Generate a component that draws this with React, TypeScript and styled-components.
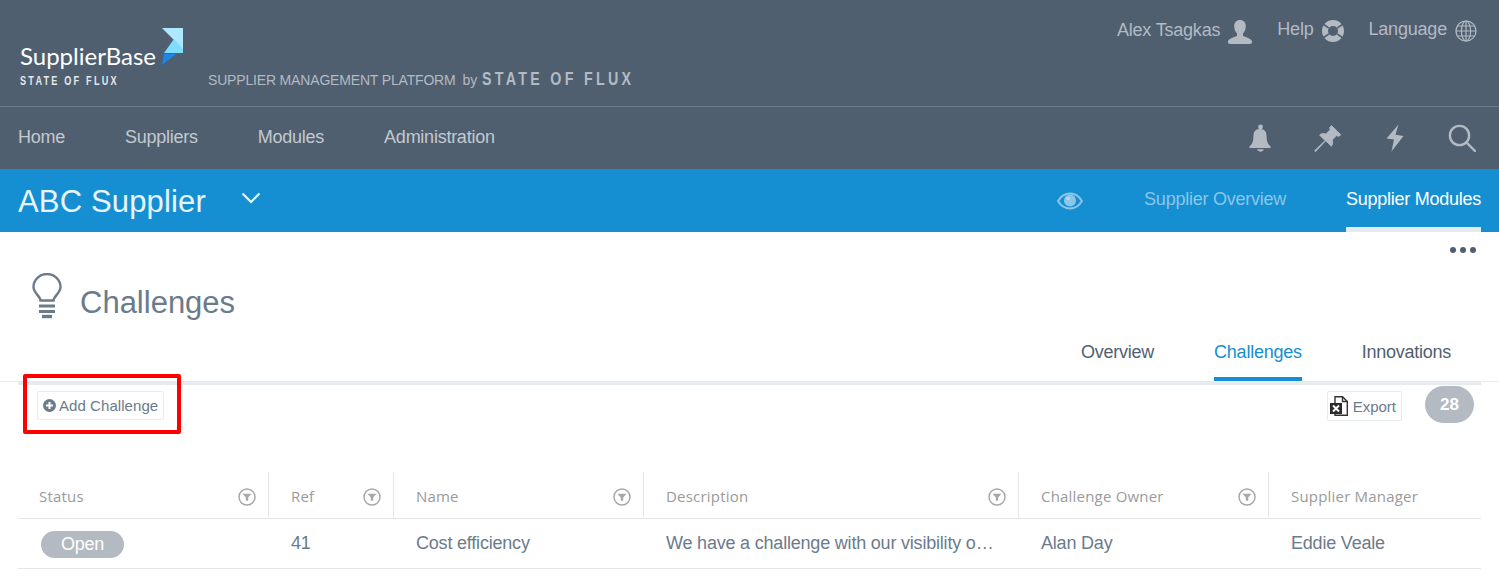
import React from 'react';
import styled, { createGlobalStyle } from 'styled-components';

const GlobalStyle = createGlobalStyle`
  html, body {
    margin: 0;
    padding: 0;
    background: #fff;
    overflow: hidden;
    font-family: 'Liberation Sans', Arial, sans-serif;
  }
`;

const Page = styled.div`
  position: relative;
  width: 1499px;
  height: 578px;
  overflow: hidden;
`;

const TopBar = styled.header`
  height: 106px;
  background: #4f5f70;
  border-bottom: 1px solid #6c7a89;
  display: flex;
  justify-content: space-between;
`;

const Brand = styled.div`
  display: flex;
  align-items: flex-end;
  padding: 0 0 17px 20px;
`;

const Logo = styled.div`
  position: relative;
  width: 164px;
  height: 60px;
  color: #fff;
`;

const LogoName = styled.div`
  position: absolute;
  left: 0;
  top: 13px;
  font-family: 'Lato', sans-serif;
  font-size: 24px;
  line-height: 28px;
`;

const LogoSub = styled.div`
  position: absolute;
  left: 0;
  top: 46px;
  font-weight: 700;
  font-size: 12px;
  letter-spacing: 2.9px;
  line-height: 12px;
  white-space: nowrap;
  color: #e4e7ea;
  transform: scaleX(0.76);
  transform-origin: left center;
`;

const LogoMark = styled.svg`
  position: absolute;
  left: 142px;
  top: -1px;
`;

const Tagline = styled.div`
  margin-left: 24px;
  display: flex;
  align-items: baseline;
  color: #b3bac2;
  font-size: 14px;
  letter-spacing: -0.17px;
  line-height: 18px;
  white-space: nowrap;
`;

const By = styled.span`
  margin-left: 7px;
`;

const TagBrand = styled.span`
  display: inline-block;
  margin-left: 5px;
  font-weight: 700;
  font-size: 19px;
  letter-spacing: 4.4px;
  transform: scaleX(0.75);
  transform-origin: left center;
`;

const UserMenu = styled.div`
  display: flex;
  align-items: flex-start;
  padding: 16px 22px 0 0;
  gap: 25px;
`;

const UserItem = styled.div`
  display: flex;
  align-items: center;
  gap: 8px;
  color: #b3bac2;
  font-size: 18px;
  letter-spacing: -0.2px;
  line-height: 24px;
  svg {
    margin-top: 4px;
  }
`;

const NavBar = styled.nav`
  height: 62px;
  background: #4f5f70;
  display: flex;
  align-items: center;
  justify-content: space-between;
  padding: 0 23px 0 18px;
`;

const NavLinks = styled.div`
  display: flex;
  gap: 60px;
  margin-top: -2px;
`;

const NavLink = styled.a`
  color: #c3c9cf;
  font-size: 18px;
  letter-spacing: -0.25px;
`;

const NavIcons = styled.div`
  display: flex;
  align-items: center;
  gap: 39px;
  margin-top: -1px;
`;

const SupplierBar = styled.div`
  height: 63px;
  background: #158fd2;
  display: flex;
  align-items: center;
  justify-content: space-between;
  padding: 0 18px;
`;

const SupplierName = styled.div`
  display: flex;
  align-items: center;
  gap: 35px;
  padding-top: 2px;
  color: #e8f4fb;
  font-size: 31px;
  letter-spacing: 0.15px;
  svg {
    margin-bottom: 8px;
  }
`;

const SupplierTabs = styled.div`
  display: flex;
  align-items: stretch;
  height: 63px;
`;

const EyeWrap = styled.div`
  display: flex;
  align-items: center;
  margin-right: 61px;
`;

const SupplierTab = styled.a<{ $active?: boolean }>`
  display: flex;
  align-items: center;
  box-sizing: border-box;
  margin-left: ${(p) => (p.$active ? '60px' : '0')};
  padding-top: 3px;
  color: ${(p) => (p.$active ? '#ffffff' : '#8cc6e8')};
  font-size: 18px;
  letter-spacing: -0.25px;
  border-bottom: 5px solid ${(p) => (p.$active ? '#e6ebef' : 'transparent')};
`;

const Dots = styled.div`
  display: flex;
  justify-content: flex-end;
  gap: 4px;
  height: 21px;
  box-sizing: border-box;
  padding: 15px 23px 0 0;
`;

const Dot = styled.span`
  width: 6px;
  height: 6px;
  border-radius: 50%;
  background: #4f5f70;
`;

const TitleRow = styled.div`
  display: flex;
  align-items: flex-start;
  height: 87px;
  padding: 20px 0 0 32px;
  box-sizing: border-box;
`;

const Title = styled.h1`
  margin: 12px 0 0 18px;
  font-weight: 400;
  font-size: 31px;
  line-height: 36px;
  color: #6b7b8c;
`;

const TabsRow = styled.div`
  height: 42px;
  display: flex;
  justify-content: flex-end;
  gap: 60px;
  padding-right: 48px;
  box-sizing: border-box;
  border-bottom: 1px solid #e6ebef;
  position: relative;
  &::after {
    content: '';
    position: absolute;
    left: 18px;
    right: 18px;
    top: 41px;
    height: 4px;
    background: #e6ebef;
  }
`;

const PageTab = styled.a<{ $active?: boolean }>`
  color: ${(p) => (p.$active ? '#158fd2' : '#4f5f70')};
  font-size: 18px;
  letter-spacing: -0.25px;
  line-height: 24px;
  height: 41px;
  box-sizing: border-box;
  border-bottom: 4px solid ${(p) => (p.$active ? '#158fd2' : 'transparent')};
`;

const Toolbar = styled.div`
  display: flex;
  align-items: flex-start;
  justify-content: space-between;
  padding: 4px 25px 0 37px;
  height: 90px;
  box-sizing: border-box;
`;

const ToolButton = styled.button`
  display: flex;
  align-items: center;
  gap: 3px;
  height: 29px;
  margin: 5px 0 0;
  padding: 0 5px;
  background: #fff;
  border: 1px solid #e6ebef;
  border-radius: 2px;
  color: #6b7b8c;
  font-family: 'Liberation Sans', Arial, sans-serif;
  font-size: 15px;
  letter-spacing: 0.06px;
`;

const ExportButton = styled(ToolButton)`
  gap: 5px;
  height: 30px;
  padding-left: 2px;
  letter-spacing: 0;
`;

const ToolRight = styled.div`
  display: flex;
  align-items: flex-start;
  gap: 23px;
`;

const CountBadge = styled.div`
  width: 49px;
  height: 37px;
  border-radius: 19px;
  background: #b3bac2;
  color: #fff;
  font-weight: 700;
  font-size: 17px;
  display: flex;
  align-items: center;
  justify-content: center;
`;

const Table = styled.div`
  margin: 0 18px;
`;

const columns = '251px 125px 250px 375px 250px 212px';

const HeaderRow = styled.div`
  display: grid;
  grid-template-columns: ${columns};
  height: 46px;
  border-bottom: 1px solid #e6e6e6;
`;

const HeaderCell = styled.div`
  display: flex;
  align-items: center;
  justify-content: space-between;
  padding: 3px 12px 0 22px;
  color: #9a9a9a;
  font-family: 'Open Sans', sans-serif;
  font-size: 15px;
  letter-spacing: 0.2px;
  border-right: 1px solid #e6e6e6;
  &:first-child {
    padding-left: 21px;
  }
  &:last-child {
    border-right: 0;
  }
`;

const HeaderLabel = styled.span`
  margin-top: -2px;
`;

const BodyRow = styled.div`
  display: grid;
  grid-template-columns: ${columns};
  height: 49px;
  border-bottom: 1px solid #e6e6e6;
`;

const BodyCell = styled.div`
  display: flex;
  align-items: center;
  padding: 0 22px;
  color: #6b7b8c;
  font-size: 18px;
  letter-spacing: -0.2px;
  white-space: nowrap;
`;

const StatusPill = styled.span`
  display: inline-flex;
  align-items: center;
  justify-content: center;
  width: 83px;
  height: 27px;
  margin: 2px 0 0 1px;
  border-radius: 14px;
  background: #b3bac2;
  color: #fff;
  font-size: 18px;
`;

const Highlight = styled.div`
  position: absolute;
  left: 23px;
  top: 374px;
  width: 158px;
  height: 60px;
  box-sizing: border-box;
  border: 4px solid #ff0000;
  border-radius: 2px;
  pointer-events: none;
`;

const grey = '#b3bac2';

const FilterIcon = () => (
  <svg width="18" height="18" viewBox="0 0 18 18">
    <circle cx="9" cy="9" r="8" fill="none" stroke="#a8a8a8" strokeWidth="1.5" />
    <path d="M4.500 5.800h9L10.200 9.600v3.200H7.800V9.600z" fill="#a8a8a8" />
  </svg>
);

const UserIcon = () => (
  <svg width="24" height="24" viewBox="0 0 24 24" fill={grey}>
    <path d="M12 0c3.600 0 5.800 2.700 5.800 6.300 0 3-1.200 5.700-2.800 7.200v2.300c1.500 1.400 9 2.300 9 6.200 0 1.200-.5 2-2 2H2c-1.500 0-2-.8-2-2 0-3.900 7.500-4.800 9-6.200v-2.300C7.400 12 6.200 9.300 6.200 6.300 6.200 2.700 8.400 0 12 0z" />
  </svg>
);

const HelpIcon = () => (
  <svg width="22" height="22" viewBox="0 0 22 22" fill="none">
    <circle cx="11" cy="11" r="8" stroke={grey} strokeWidth="6" />
    <path
      d="M15.100 8.100L21 4M15.100 13.900L21 18M6.900 8.100L1 4M6.900 13.900L1 18"
      stroke="#4f5f70"
      strokeWidth="1.600"
    />
  </svg>
);

const GlobeIcon = () => (
  <svg width="22" height="22" viewBox="0 0 22 22" fill="none" stroke={grey} strokeWidth="1.200">
    <circle cx="11" cy="11" r="10" />
    <ellipse cx="11" cy="11" rx="4.600" ry="10" />
    <path d="M11 1v20M1 11h20M2.400 6h17.200M2.400 16h17.200" />
  </svg>
);

const BellIcon = () => (
  <svg width="28" height="28" viewBox="0 0 28 28" fill={grey}>
    <circle cx="13.500" cy="3" r="2.400" />
    <path d="M13.500 5c4.200 0 6 3.200 6 7 0 4.500 1 8.300 4 10.500V24h-21v-1.500c3-2.200 4-6 4-10.500 0-3.800 1.800-7 6-7z" />
    <path d="M10 25.300h7c-.7 1.700-2 2.400-3.500 2.400s-2.800-.7-3.500-2.400z" />
  </svg>
);

const PinIcon = () => (
  <svg width="28" height="28" viewBox="0 0 28 28" fill={grey}>
    <path
      stroke={grey}
      strokeWidth="0.800"
      strokeLinejoin="round"
      d="M17.500 1.500l9.300 9.300-2.300 1.600-1.900-.8-4.300 4.300c.8 2.500.4 4.700-1 6.400l-5.600-5.600L1.500 27.700l-.9-.9 10.500-10.200L5.500 11c1.700-1.400 3.900-1.800 6.400-1l4.300-4.300-.6-1.900z"
    />
  </svg>
);

const BoltIcon = () => (
  <svg width="28" height="28" viewBox="0 0 28 28" fill={grey}>
    <path d="M17.500 0.500L14.500 10.800 22.500 12 10.500 27.500 13 15.500 5.500 14.500z" />
  </svg>
);

const SearchIcon = () => (
  <svg width="28" height="28" viewBox="0 0 28 28" fill="none" stroke={grey} strokeWidth="2.400">
    <circle cx="11.500" cy="11.500" r="9.600" />
    <path d="M18.500 18.500L27 27" strokeLinecap="round" />
  </svg>
);

const EyeIcon = () => (
  <svg width="26" height="18" viewBox="0 0 26 18">
    <path
      d="M1 9C4 4 8 1.500 13 1.500S22 4 25 9c-3 5-7 7.500-12 7.500S4 14 1 9z"
      fill="none"
      stroke="#8cc6e8"
      strokeWidth="2"
    />
    <circle cx="13" cy="8.500" r="6" fill="#8cc6e8" />
    <circle cx="11" cy="6.500" r="1.800" fill="#b5daf0" />
  </svg>
);

const BulbIcon = () => (
  <svg width="30" height="46" viewBox="0 0 30 46" fill="none" stroke="#6b7b8c">
    <path
      strokeWidth="2.400"
      d="M8.500 27.500c0-4-7-7.500-7-13.500a13.500 13 0 0 1 27 0c0 6-7 9.500-7 13.500z"
    />
    <path strokeWidth="3" d="M7 33h16M7 38.500h16" />
    <path strokeWidth="3.400" d="M10 43.500h10" />
  </svg>
);

const ChevronIcon = () => (
  <svg width="20" height="12" viewBox="0 0 20 12" fill="none" stroke="#e8f4fb" strokeWidth="2.200">
    <path d="M1.500 1.500L10 10l8.500-8.500" />
  </svg>
);

const PlusCircleIcon = () => (
  <svg width="13" height="13" viewBox="0 0 13 13">
    <circle cx="6.500" cy="6.500" r="6.500" fill="#6b7b8c" />
    <path d="M6.500 3v7M3 6.500h7" stroke="#fff" strokeWidth="2" />
  </svg>
);

const ExcelIcon = () => (
  <svg width="18" height="20" viewBox="0 0 18 20">
    <path d="M5 .7h7.500l4.800 4.800v13.800H5z" fill="#fff" stroke="#333" strokeWidth="1.400" />
    <path d="M12.500.7v4.800h4.800" fill="none" stroke="#333" strokeWidth="1.400" />
    <rect x="0" y="7" width="12" height="11" fill="#2b2b2b" />
    <path d="M3 9.500l6 6M9 9.500l-6 6" stroke="#fff" strokeWidth="2" />
  </svg>
);

const LogoArrow = () => (
  <LogoMark width="21" height="37" viewBox="0 0 21 37">
    <path d="M0 0h21v23L12 12z" fill="#aee8ff" />
    <path d="M12 11l9 10v4H2z" fill="#7fdcff" />
    <path d="M2 26h12L0 37z" fill="#1f86e8" />
  </LogoMark>
);

export default function App() {
  return (
    <Page>
      <GlobalStyle />
      <TopBar>
        <Brand>
          <Logo>
            <LogoName>SupplierBase</LogoName>
            <LogoSub>STATE OF FLUX</LogoSub>
            <LogoArrow />
          </Logo>
          <Tagline>
            SUPPLIER MANAGEMENT PLATFORM
            <By>by</By>
            <TagBrand>STATE OF FLUX</TagBrand>
          </Tagline>
        </Brand>
        <UserMenu>
          <UserItem>
            Alex Tsagkas <UserIcon />
          </UserItem>
          <UserItem>
            Help <HelpIcon />
          </UserItem>
          <UserItem>
            Language <GlobeIcon />
          </UserItem>
        </UserMenu>
      </TopBar>
      <NavBar>
        <NavLinks>
          <NavLink>Home</NavLink>
          <NavLink>Suppliers</NavLink>
          <NavLink>Modules</NavLink>
          <NavLink>Administration</NavLink>
        </NavLinks>
        <NavIcons>
          <BellIcon />
          <PinIcon />
          <BoltIcon />
          <SearchIcon />
        </NavIcons>
      </NavBar>
      <SupplierBar>
        <SupplierName>
          ABC Supplier
          <ChevronIcon />
        </SupplierName>
        <SupplierTabs>
          <EyeWrap>
            <EyeIcon />
          </EyeWrap>
          <SupplierTab>Supplier Overview</SupplierTab>
          <SupplierTab $active>Supplier Modules</SupplierTab>
        </SupplierTabs>
      </SupplierBar>
      <Dots>
        <Dot />
        <Dot />
        <Dot />
      </Dots>
      <TitleRow>
        <BulbIcon />
        <Title>Challenges</Title>
      </TitleRow>
      <TabsRow>
        <PageTab>Overview</PageTab>
        <PageTab $active>Challenges</PageTab>
        <PageTab>Innovations</PageTab>
      </TabsRow>
      <Toolbar>
        <ToolButton>
          <PlusCircleIcon />
          Add Challenge
        </ToolButton>
        <ToolRight>
          <ExportButton>
            <ExcelIcon />
            Export
          </ExportButton>
          <CountBadge>28</CountBadge>
        </ToolRight>
      </Toolbar>
      <Table>
        <HeaderRow>
          <HeaderCell>
            <HeaderLabel>Status</HeaderLabel> <FilterIcon />
          </HeaderCell>
          <HeaderCell>
            <HeaderLabel>Ref</HeaderLabel> <FilterIcon />
          </HeaderCell>
          <HeaderCell>
            <HeaderLabel>Name</HeaderLabel> <FilterIcon />
          </HeaderCell>
          <HeaderCell>
            <HeaderLabel>Description</HeaderLabel> <FilterIcon />
          </HeaderCell>
          <HeaderCell>
            <HeaderLabel>Challenge Owner</HeaderLabel> <FilterIcon />
          </HeaderCell>
          <HeaderCell>
            <HeaderLabel>Supplier Manager</HeaderLabel>
          </HeaderCell>
        </HeaderRow>
        <BodyRow>
          <BodyCell>
            <StatusPill>Open</StatusPill>
          </BodyCell>
          <BodyCell>41</BodyCell>
          <BodyCell>Cost efficiency</BodyCell>
          <BodyCell>We have a challenge with our visibility o…</BodyCell>
          <BodyCell>Alan Day</BodyCell>
          <BodyCell>Eddie Veale</BodyCell>
        </BodyRow>
      </Table>
      <Highlight />
    </Page>
  );
}
